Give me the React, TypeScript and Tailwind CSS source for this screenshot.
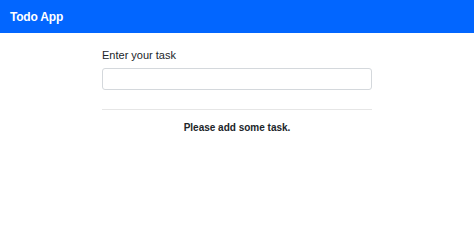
export default function App() {
  return (
    <div className="min-h-screen bg-white font-['Liberation_Sans',Arial,sans-serif] text-[#212529]">
      <nav className="flex h-[33px] items-center bg-[#0266ff] px-[10px]">
        <span className="text-[12px] font-bold tracking-[-0.2px] text-white">Todo App</span>
      </nav>
      <main className="mx-auto w-[270px] pt-[15px]">
        <label className="block text-[11px] leading-[15px]">Enter your task</label>
        <input
          type="text"
          className="mt-[5px] block h-[22px] w-full rounded-[3px] border border-[#d4d8dc] bg-white px-2 text-[11px] outline-none"
        />
        <hr className="mt-[19px] border-t border-[#e6e6e6]" />
        <p className="mt-[11px] text-center text-[10px] font-bold leading-[14px]">Please add some task.</p>
      </main>
    </div>
  );
}
